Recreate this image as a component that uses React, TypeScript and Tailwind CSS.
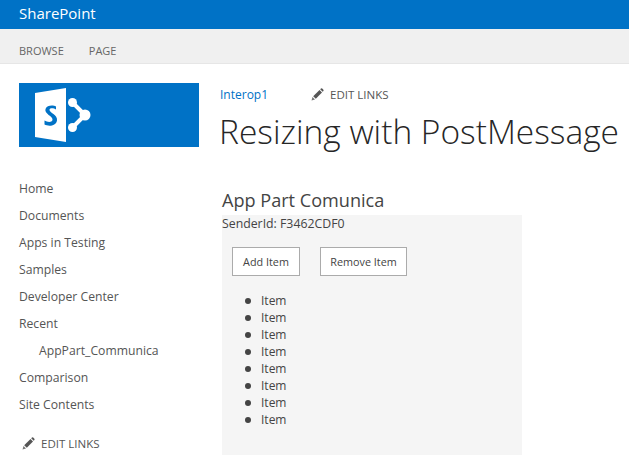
const font = "font-['Open_Sans','Noto_Sans',sans-serif]";

const navLinks = ["Home", "Documents", "Apps in Testing", "Samples", "Developer Center", "Recent"];

const Pencil = () => (
    <svg width="13" height="13" viewBox="0 0 13 13" className="shrink-0">
        <path d="M0.5 12.5 L1.5 9 L4 11.5 Z" fill="#777" />
        <path d="M2.2 8.2 L8.5 2 L11 4.5 L4.8 10.8 Z" fill="#555" />
        <path d="M9.2 1.3 L10 0.5 Q10.6 0.1 11.2 0.6 L12.4 1.8 Q12.9 2.4 12.4 3 L11.7 3.8 Z" fill="#555" />
    </svg>
);

const Logo = () => (
    <svg width="180" height="64" viewBox="0 0 180 64" className="block bg-[#0072c6]">
        <path d="M16 10 L47 5 L47 59 L16 54 Z" fill="#fff" />
        <path
            d="M37 23.5 C34 22 28 22 26.5 26 C25 31 34 33 33.5 37 C33 39.5 28.5 39.5 25.5 37.5 L25.5 41.5 C29 43.5 37 43.5 38 37.5 C39 31.5 30 30 30.5 26.5 C31 24.5 35 25 37 26.5 Z"
            fill="#0072c6"
        />
        <circle cx="53.5" cy="19.5" r="4.5" fill="#fff" />
        <circle cx="53.5" cy="44.5" r="4.5" fill="#fff" />
        <circle cx="66" cy="32" r="5.5" fill="#fff" />
        <path d="M54 20 L66 32 L54 44" fill="none" stroke="#fff" strokeWidth="4" />
    </svg>
);

const App = () => {
    return (
        <div className={`${font} w-[629px] h-[463px] overflow-hidden bg-white text-[#444]`}>
            <div className="h-[29px] bg-[#0072c6] pl-[19px] text-[15px] leading-[27px] text-white">SharePoint</div>
            <div className="h-[35px] bg-[#f0f0f0] border-b border-[#e6e6e6] pl-[19px] flex items-center gap-[25px] pt-[10px] text-[11px] text-[#666]">
                <span>BROWSE</span>
                <span>PAGE</span>
            </div>

            <div className="flex">
                <div className="w-[222px] shrink-0 pl-[19px] pt-[19px]">
                    <Logo />
                    <ul className="mt-[28px] text-[12.2px] text-[#555] leading-[27px]">
                        {navLinks.map((link) => (
                            <li key={link}>{link}</li>
                        ))}
                        <li className="pl-[20px]">AppPart_Communica</li>
                        <li>Comparison</li>
                        <li>Site Contents</li>
                    </ul>
                    <div className="mt-[12px] flex items-center gap-[6px] pl-[3px] text-[11.5px] text-[#555] leading-[27px]">
                        <Pencil />
                        <span>EDIT LINKS</span>
                    </div>
                </div>

                <div className="flex-1 min-w-0">
                    <div className="pt-[21px] -ml-[2px] flex items-center h-[40px] text-[12px]">
                        <span className="text-[#0072c6]">Interop1</span>
                        <span className="ml-[43px] flex items-center gap-[6px] text-[11.5px] text-[#555]">
                            <Pencil />
                            EDIT LINKS
                        </span>
                    </div>
                    <h1 className="-ml-[3px] mt-[2px] h-[50px] text-[33.5px] font-light leading-[50px] whitespace-nowrap text-[#262626]">
                        Resizing with PostMessage
                    </h1>
                    <h2 className="mt-[29px] h-[30px] text-[18.1px] font-normal leading-[30px] text-[#444]">App Part Comunica</h2>
                    <div className="w-[300px] h-[240px] bg-[#f5f5f5] text-[12.3px]">
                        <div className="leading-[18px]">SenderId: F3462CDF0</div>
                        <div className="mt-[14px] ml-[10px] flex gap-[20px]">
                            <button className="h-[29px] w-[68px] border border-[#ababab] bg-white pt-[1px] text-[10.8px] text-[#444]">Add Item</button>
                            <button className="h-[29px] w-[87px] border border-[#ababab] bg-white pt-[1px] text-[10.8px] text-[#444]">Remove Item</button>
                        </div>
                        <ul className="mt-[16px] ml-[23px] text-[12px] leading-[17px] text-[#444]">
                            {Array.from({ length: 8 }, (_, i) => (
                                <li key={i} className="flex items-center gap-[10px]">
                                    <span className="h-[6px] w-[6px] rounded-full bg-[#444]" />
                                    Item
                                </li>
                            ))}
                        </ul>
                    </div>
                </div>
            </div>
        </div>
    );
};

export default App;
